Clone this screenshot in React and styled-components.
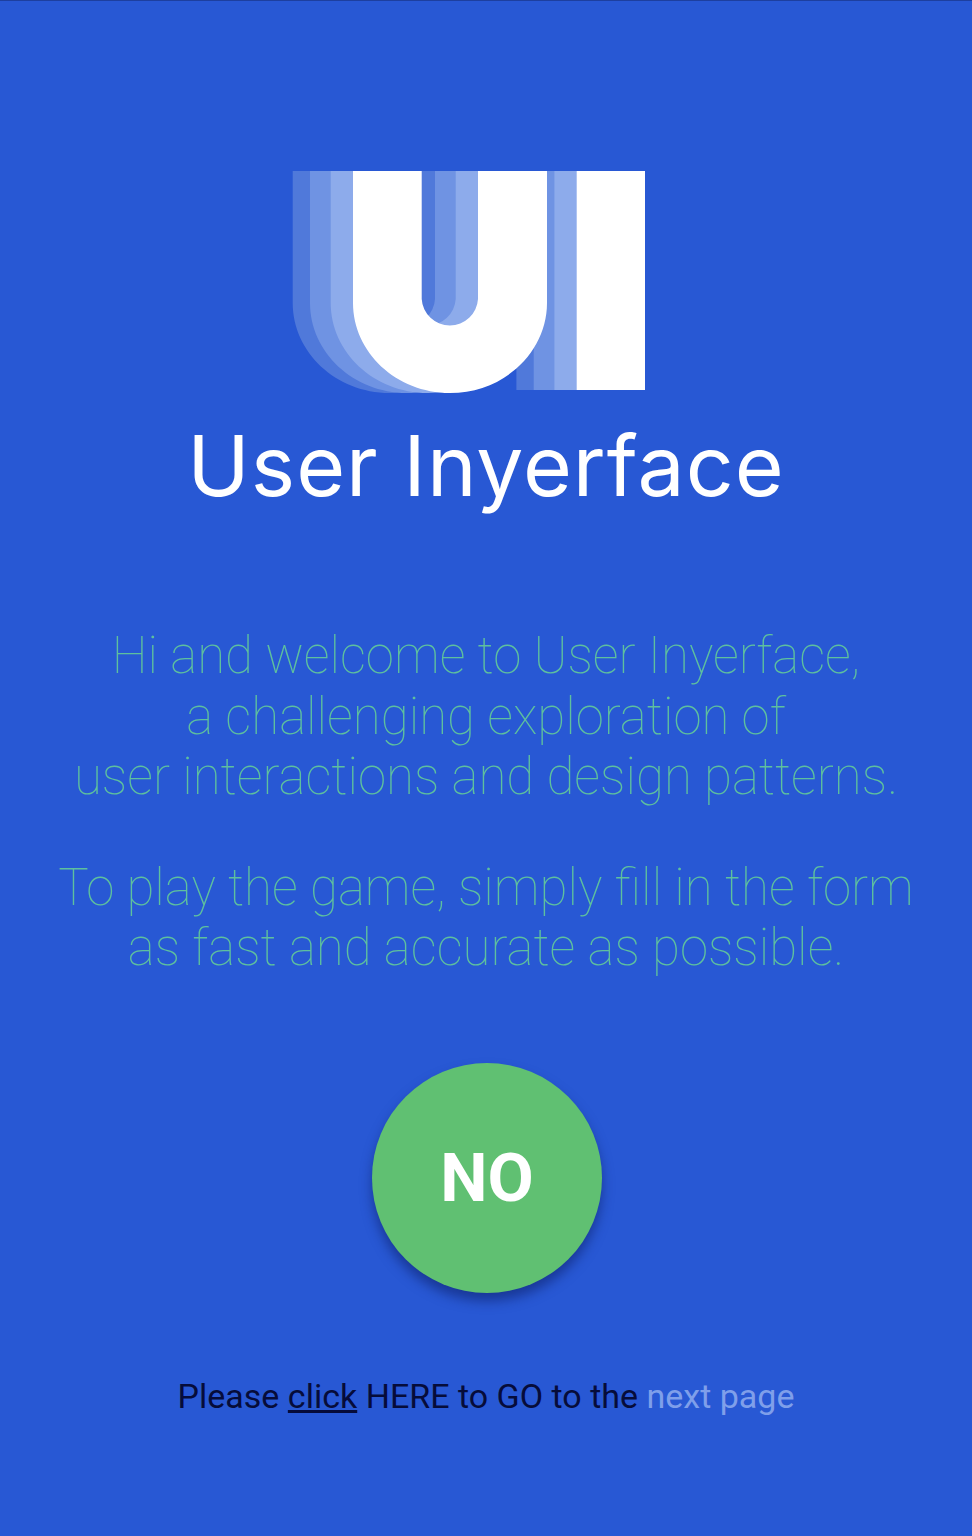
import React from "react";
import styled, { createGlobalStyle } from "styled-components";

const GlobalStyle = createGlobalStyle`
  html, body {
    margin: 0;
    padding: 0;
    background: #2858d4;
  }
`;

const Page = styled.div`
  height: 1536px;
  box-sizing: border-box;
  border-top: 1px solid #1d3f9f;
  background: #2858d4;
  display: flex;
  flex-direction: column;
  align-items: center;
  padding-top: 167px;
  overflow: hidden;
`;

const Logo = styled.svg`
  display: block;
  width: 360px;
  height: 228px;
  margin-left: -32px;
`;

const Title = styled.h1`
  margin: 25px 0 0;
  font-family: "Inter", "Liberation Sans", sans-serif;
  font-size: 84px;
  line-height: 90px;
  font-weight: 400;
  letter-spacing: 1px;
  color: #ffffff;
`;

const Intro = styled.div`
  margin-top: 115px;
  display: flex;
  flex-direction: column;
  gap: 50px;
  align-items: center;
`;

const Paragraph = styled.p`
  margin: 0;
  font-family: "Roboto", "Liberation Sans", sans-serif;
  font-size: 51px;
  line-height: 60.5px;
  font-weight: 100;
  color: #5ec09e;
  text-align: center;
  white-space: nowrap;
`;

const NoButton = styled.button`
  margin: 84px 0 0 2px;
  width: 230px;
  height: 230px;
  border: 0;
  border-radius: 50%;
  background: #60c072;
  color: #ffffff;
  font-family: "Roboto", "Liberation Sans", sans-serif;
  font-size: 67px;
  font-weight: 700;
  box-shadow: 0 8px 12px rgba(15, 35, 110, 0.6);
`;

const Hint = styled.p`
  margin: 85px 0 0;
  font-family: "Roboto", "Liberation Sans", sans-serif;
  font-size: 34px;
  line-height: 36px;
  color: #060c3a;
`;

const ClickWord = styled.span`
  text-decoration: underline;
`;

const NextPage = styled.span`
  color: #7f9fea;
`;

const U_PATH =
  "M63 3H131.7V131a28.2 28.2 0 0 0 56.3 0V3H257V135C257 184 214 225 160 225C106 225 63 184 63 135Z";
const I_PATH = "M286.7 3H355V222H286.7Z";

const layers = [
  { dx: -60.3, fill: "#5079da" },
  { dx: -43, fill: "#6f93e3" },
  { dx: -22.3, fill: "#8dabeb" },
];

const LogoMark = () => (
  <Logo viewBox="0 0 360 228">
    {layers.map((layer) => (
      <g key={layer.dx} transform={`translate(${layer.dx} 0)`} fill={layer.fill}>
        <path d={U_PATH} />
        <path d={I_PATH} />
      </g>
    ))}
    <path d={U_PATH} fill="#ffffff" />
    <path d={I_PATH} fill="#ffffff" />
  </Logo>
);

export default function App() {
  return (
    <Page>
      <GlobalStyle />
      <LogoMark />
      <Title>User Inyerface</Title>
      <Intro>
        <Paragraph>
          Hi and welcome to User Inyerface,
          <br />
          a challenging exploration of
          <br />
          user interactions and design patterns.
        </Paragraph>
        <Paragraph>
          To play the game, simply fill in the form
          <br />
          as fast and accurate as possible.
        </Paragraph>
      </Intro>
      <NoButton>NO</NoButton>
      <Hint>
        Please <ClickWord>click</ClickWord> HERE to GO to the <NextPage>next page</NextPage>
      </Hint>
    </Page>
  );
}
